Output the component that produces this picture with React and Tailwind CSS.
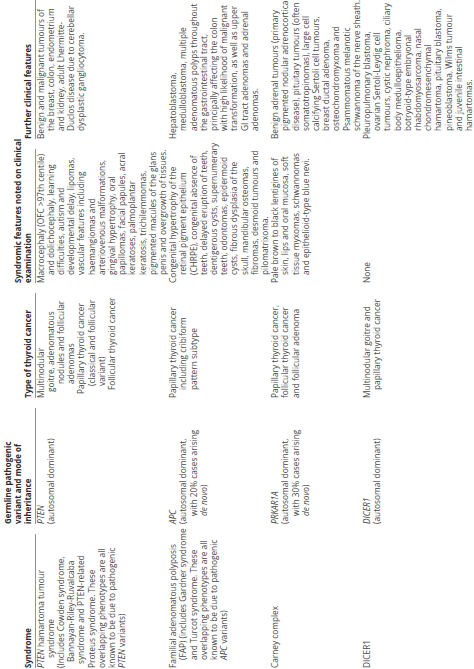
import React from 'react';

const I = ({ children }) => <span className="italic">{children}</span>;

const indentClass = {
  0: '',
  4: 'pl-1',
  6: 'pl-1.5',
  8: 'pl-2',
  10: 'pl-2.5',
  12: 'pl-3',
  14: 'pl-3.5',
};

const headers = [
  ['Syndrome'],
  ['Germline pathogenic', 'variant and mode of', 'inheritance'],
  ['Type of thyroid cancer'],
  ['Syndromic features noted on clinical', 'examination'],
  ['Further clinical features'],
];

// each cell is a list of [indent, text] lines, as set in the printed table
const rows = [
  [
    [
      [0, <><I>PTEN</I> hamartoma tumour</>],
      [10, 'syndrome'],
      [0, '(Includes Cowden syndrome,'],
      [6, 'Bannayan-Riley-Ruvalcaba'],
      [4, 'syndrome and PTEN-related'],
      [0, 'Proteus syndrome. These'],
      [0, 'overlapping phenotypes are all'],
      [0, 'known to be due to pathogenic'],
      [0, <><I>PTEN</I> variants)</>],
    ],
    [
      [0, <I>PTEN</I>],
      [0, '(autosomal dominant)'],
    ],
    [
      [0, 'Multinodular'],
      [6, 'goitre, adenomatous'],
      [14, 'nodules and follicular'],
      [14, 'adenomas'],
      [4, 'Papillary thyroid cancer'],
      [12, '(classical and follicular'],
      [12, 'variant)'],
      [8, 'Follicular thyroid cancer'],
    ],
    [
      [0, 'Macrocephaly (OFC >97th centile)'],
      [8, 'and dolichocephaly, learning'],
      [8, 'difficulties, autism and'],
      [8, 'developmental delay, lipomas,'],
      [8, 'vascular features including'],
      [8, 'haemangiomas and'],
      [8, 'arteriovenous malformations,'],
      [8, 'gingival hypertrophy, oral'],
      [8, 'papillomas, facial papules, acral'],
      [8, 'keratoses, palmoplantar'],
      [8, 'keratosis, trichilemmomas,'],
      [8, 'pigmented macules of the glans'],
      [8, 'penis and overgrowth of tissues.'],
    ],
    [
      [0, 'Benign and malignant tumours of'],
      [8, 'the breast, colon, endometrium'],
      [8, 'and kidney, adult Lhermitte-'],
      [8, 'Duclos disease due to cerebellar'],
      [8, 'dysplastic gangliocytoma.'],
    ],
  ],
  [
    [
      [0, 'Familial adenomatous polyposis'],
      [8, '(FAP) (includes Gardner syndrome'],
      [8, 'and Turcot syndrome. These'],
      [8, 'overlapping phenotypes are all'],
      [8, 'known to be due to pathogenic'],
      [8, <><I>APC</I> variants)</>],
    ],
    [
      [0, <I>APC</I>],
      [0, '(autosomal dominant,'],
      [8, 'with 20% cases arising'],
      [8, <><I>de novo</I>)</>],
    ],
    [
      [0, 'Papillary thyroid cancer'],
      [8, 'including cribiform'],
      [8, 'pattern subtype'],
    ],
    [
      [0, 'Congenital hypertrophy of the'],
      [8, 'retinal pigment epithelium'],
      [8, '(CHRPE), congenital absence of'],
      [8, 'teeth, delayed eruption of teeth,'],
      [8, 'dentigerous cysts, supernumerary'],
      [8, 'teeth, odontomas, epidermoid'],
      [8, 'cysts, fibrous dysplasia of the'],
      [8, 'skull, mandibular osteomas,'],
      [8, 'fibromas, desmoid tumours and'],
      [8, 'pilomatrixoma.'],
    ],
    [
      [0, 'Hepatoblastoma,'],
      [8, 'medulloblastoma, multiple'],
      [8, 'adenomatous polyps throughout'],
      [8, 'the gastrointestinal tract,'],
      [8, 'principally affecting the colon'],
      [8, 'with high likelihood of malignant'],
      [8, 'transformation, as well as upper'],
      [8, 'GI tract adenomas and adrenal'],
      [8, 'adenomas.'],
    ],
  ],
  [
    [[0, 'Carney complex']],
    [
      [0, <I>PRKAR1A</I>],
      [0, '(autosomal dominant,'],
      [8, 'with 30% cases arising'],
      [8, <><I>de novo</I>)</>],
    ],
    [
      [0, 'Papillary thyroid cancer,'],
      [0, 'follicular thyroid cancer'],
      [0, 'and follicular adenoma'],
    ],
    [
      [0, 'Pale brown to black lentigines of'],
      [8, 'skin, lips and oral mucosa, soft'],
      [8, 'tissue myxomas, schwannomas'],
      [8, 'and epithelioid-type blue nevi.'],
    ],
    [
      [0, 'Benign adrenal tumours (primary'],
      [8, 'pigmented nodular adrenocortical'],
      [8, 'disease), pituitary tumours (often'],
      [8, 'somatotropinomas), large cell'],
      [8, 'calcifying Sertoli cell tumours,'],
      [8, 'breast ductal adenoma,'],
      [8, 'osteochondromyxoma and'],
      [8, 'Psammomatous melanotic'],
      [8, 'schwannoma of the nerve sheath.'],
    ],
  ],
  [
    [[0, 'DICER1']],
    [
      [0, <I>DICER1</I>],
      [0, '(autosomal dominant)'],
    ],
    [
      [0, 'Multinodular goitre and'],
      [8, 'papillary thyroid cancer'],
    ],
    [[0, 'None']],
    [
      [0, 'Pleuropulmonary blastoma,'],
      [8, 'ovarian Sertoli-Leydig cell'],
      [8, 'tumours, cystic nephroma, ciliary'],
      [8, 'body medulloepithelioma,'],
      [8, 'botryoid-type embryonal'],
      [8, 'rhabdomyosarcoma, nasal'],
      [8, 'chondromesenchymal'],
      [8, 'hamartoma, pituitary blastoma,'],
      [8, 'pineoblastoma, Wilms tumour'],
      [8, 'and juvenile intestinal'],
      [8, 'hamartomas.'],
    ],
  ],
];

const Cell = ({ lines }) => (
  <div className="flex flex-col">
    {lines.map(([indent, text], i) => (
      <div key={i} className={`whitespace-nowrap ${indentClass[indent]}`}>
        {text}
      </div>
    ))}
  </div>
);

const App = () => {
  return (
    <div className="w-[474px] h-[669px] overflow-hidden bg-white">
      {/* the page is printed sideways: lay the table out upright, then turn it */}
      <div className="w-[669px] h-[474px] origin-top-left [transform:translateY(669px)_rotate(-90deg)] font-['Open_Sans',sans-serif] text-[8.3px] leading-[10.2px] text-[#474747]">
        <div className="grid grid-cols-[144px_126px_115px_144px_140px] pl-[1px]">
          {headers.map((h, i) => (
            <div
              key={i}
              className={`h-[35.5px] pb-[1px] flex flex-col justify-end border-b-[1.5px] border-[#8e91a8] font-bold text-[7.9px] text-[#2b2b2b] ${i < 4 ? 'mr-[10px]' : ''}`}
            >
              {h.map((line, j) => (
                <div key={j} className="whitespace-nowrap">{line}</div>
              ))}
            </div>
          ))}
          {rows.map((row, r) =>
            row.map((cell, c) => <Cell key={`${r}-${c}`} lines={cell} />)
          )}
        </div>
      </div>
    </div>
  );
};

export default App;
